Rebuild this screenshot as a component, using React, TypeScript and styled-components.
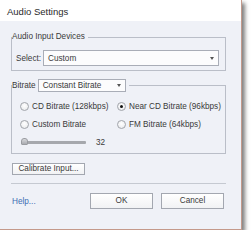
import React, { useState } from "react";
import styled, { createGlobalStyle } from "styled-components";

const GlobalStyle = createGlobalStyle`
  html, body {
    margin: 0;
    padding: 0;
    background: #ffffff;
  }
  body {
    font-family: "Liberation Sans", Arial, sans-serif;
    font-size: 8.2px;
    color: #3a3a3a;
  }
`;

const bitrates = [
  "CD Bitrate (128kbps)",
  "Near CD Bitrate (96kbps)",
  "Custom Bitrate",
  "FM Bitrate (64kbps)",
];

const App = () => {
  const [choice, setChoice] = useState(1);

  return (
    <>
      <GlobalStyle />
      <SDialog>
        <SHeader>Audio Settings</SHeader>
        <SBody>
          <SGroup>
            <SLegend>Audio Input Devices</SLegend>
            <SSelectRow>
              <SLabel>Select:</SLabel>
              <SSelect>
                <span>Custom</span>
                <SArrow />
              </SSelect>
            </SSelectRow>
          </SGroup>

          <SGroup $gap={8}>
            <SLegend>
              <SLegendRow>
                <SLabel>Bitrate</SLabel>
                <SSmallSelect>
                  <span>Constant Bitrate</span>
                  <SArrow />
                </SSmallSelect>
              </SLegendRow>
            </SLegend>
            <SRadioGrid>
              {bitrates.map((b, index) => (
                <SRadioItem key={b} onClick={() => setChoice(index)}>
                  <SRadio className={choice === index ? "active" : ""} />
                  {b}
                </SRadioItem>
              ))}
            </SRadioGrid>
            <SSliderRow>
              <STrack>
                <SThumb />
              </STrack>
              <SValue>32</SValue>
            </SSliderRow>
          </SGroup>

          <SButton $width={73}>Calibrate Input...</SButton>
          <SSeparator />

          <SFooter>
            <SLink>Help...</SLink>
            <SButtons>
              <SButton $width={63} $height={16}>OK</SButton>
              <SButton $width={63} $height={16}>Cancel</SButton>
            </SButtons>
          </SFooter>
        </SBody>
      </SDialog>
    </>
  );
};

const SDialog = styled.div`
  width: 242px;
  height: 230px;
  box-sizing: border-box;
  background: #eff1f7;
  border-right: 1px solid #c4998a;
  border-bottom: 1px solid #c4998a;
  box-shadow: 3px 3px 4px rgba(0, 0, 0, 0.5);
  display: flex;
  flex-direction: column;
`;

const SHeader = styled.div`
  height: 21px;
  background: #ffffff;
  padding-left: 7px;
  line-height: 23px;
  font-size: 9.5px;
  color: #2a2a2a;
`;

const SBody = styled.div`
  padding: 11px 15px 0 11px;
  display: flex;
  flex-direction: column;
`;

const SGroup = styled.fieldset<{ $gap?: number }>`
  margin: ${(p) => p.$gap ?? 0}px 0 0 0;
  padding: 0;
  border: 1px solid #babec8;
  min-width: 0;
`;

const SLegend = styled.legend`
  padding: 0 3px 0 0;
  margin: 0;
  line-height: 10px;
`;

const SLegendRow = styled.div`
  display: flex;
  align-items: center;
  gap: 2px;
`;

const SLabel = styled.span`
  color: #3a3a3a;
`;

const SSelectRow = styled.div`
  display: flex;
  align-items: center;
  gap: 2px;
  padding: 8px 6px 4px 4px;
`;

const SSelect = styled.div`
  flex: 1;
  height: 16px;
  box-sizing: border-box;
  border: 1px solid #a9adb7;
  background: #fcfcfd;
  display: flex;
  align-items: center;
  justify-content: space-between;
  padding: 0 4px;
`;

const SSmallSelect = styled(SSelect)`
  flex: none;
  width: 88px;
  height: 13px;
`;

const SArrow = styled.span`
  width: 0;
  height: 0;
  border-left: 2.5px solid transparent;
  border-right: 2.5px solid transparent;
  border-top: 3px solid #555;
`;

const SRadioGrid = styled.div`
  display: grid;
  grid-template-columns: 97px 1fr;
  grid-auto-rows: 18px;
  padding: 5px 0 0 8px;
`;

const SRadioItem = styled.label`
  display: flex;
  align-items: center;
  gap: 3px;
  cursor: pointer;
`;

const SRadio = styled.span`
  width: 9px;
  height: 9px;
  box-sizing: border-box;
  border-radius: 50%;
  border: 1px solid #a2a5ab;
  background: radial-gradient(circle at 50% 40%, #ffffff, #e6e7ea);
  position: relative;
  &.active::after {
    content: "";
    position: absolute;
    left: 2px;
    top: 2px;
    width: 3px;
    height: 3px;
    border-radius: 50%;
    background: #111;
  }
`;

const SSliderRow = styled.div`
  display: flex;
  align-items: center;
  height: 18px;
  padding: 0 0 2px 9px;
  gap: 10px;
`;

const STrack = styled.div`
  width: 65px;
  height: 3px;
  background: #a6a8ad;
  border-radius: 1px;
  position: relative;
`;

const SThumb = styled.span`
  position: absolute;
  left: 0;
  top: -3px;
  width: 7px;
  height: 7px;
  border-radius: 3px 3px 1px 1px;
  background: linear-gradient(#d8d9dc, #a9abb0);
  border: 1px solid #9a9ca1;
  box-sizing: border-box;
`;

const SValue = styled.span`
  color: #3a3a3a;
`;

const SButton = styled.button<{ $width: number; $height?: number }>`
  width: ${(p) => p.$width}px;
  height: ${(p) => p.$height ?? 12}px;
  margin: ${(p) => (p.$height ? 0 : "9px 0 0 1px")};
  padding: 0;
  border: 1px solid #a3a7b0;
  background: linear-gradient(#ffffff, #f1f2f4);
  font-family: inherit;
  font-size: 8.2px;
  color: #3a3a3a;
  line-height: 10px;
  cursor: pointer;
`;

const SSeparator = styled.div`
  height: 1px;
  background: #c5c9d1;
  margin-top: 8px;
`;

const SFooter = styled.div`
  display: flex;
  align-items: center;
  justify-content: space-between;
  margin-top: 9px;
  padding: 0 2px 0 1px;
`;

const SLink = styled.span`
  color: #3d6db3;
`;

const SButtons = styled.div`
  display: flex;
  gap: 8px;
`;

export default App;
